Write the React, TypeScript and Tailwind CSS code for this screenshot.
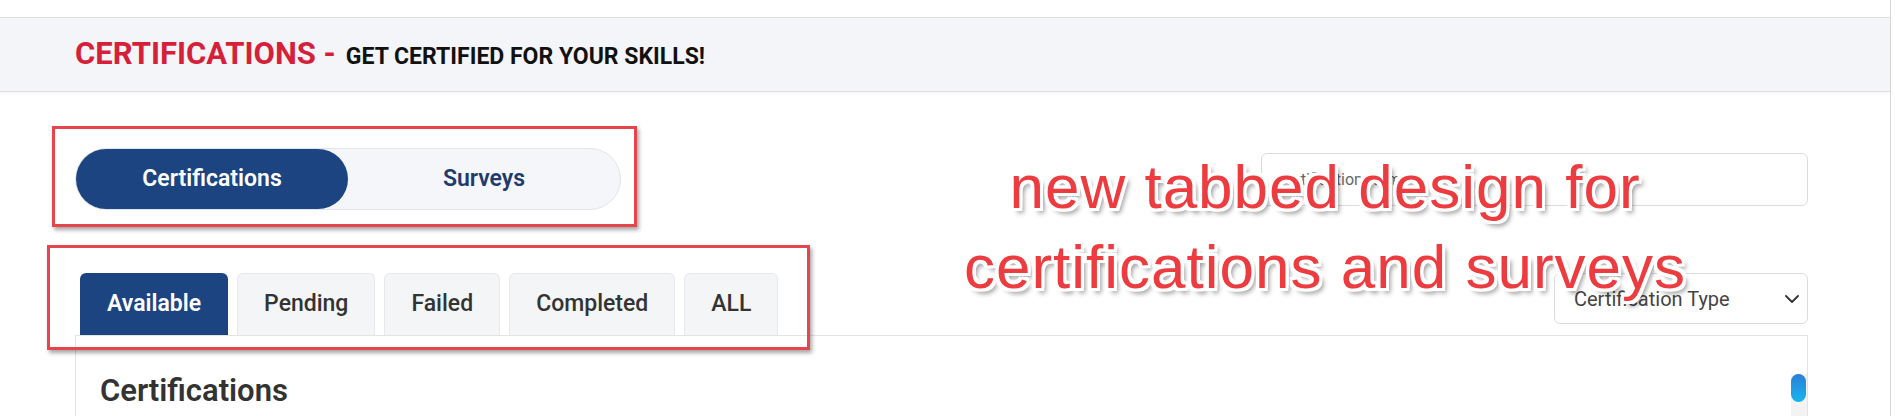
import { useState } from "react";

const tabs = ["Available", "Pending", "Failed", "Completed", "ALL"];

const outline =
  "[text-shadow:-3px_-3px_0_#fff,3px_-3px_0_#fff,-3px_3px_0_#fff,3px_3px_0_#fff,0_-3px_0_#fff,0_3px_0_#fff,-3px_0_0_#fff,3px_0_0_#fff,4px_5px_5px_rgba(0,0,0,0.45)]";

const App = () => {
  const [mode, setMode] = useState("certifications");
  const [tab, setTab] = useState("Available");

  return (
    <div className="relative h-[416px] w-full overflow-hidden bg-white font-['Roboto',sans-serif]">
      <div className="flex h-full">
        <div className="flex h-full w-[1891px] flex-col border-r border-[#d9d9d9] pt-[17px]">
          {/* Page title */}
          <header className="flex h-[75px] items-center border-y border-[#dedede] bg-[#f4f5f8] pl-[75px] shadow-[0_2px_3px_rgba(0,0,0,0.04)]">
            <h1 className="flex items-baseline">
              <span className="text-[31px] font-bold text-[#d61f3a]">CERTIFICATIONS -</span>
              <span className="ml-[10px] text-[23px] font-bold text-[#111]">GET CERTIFIED FOR YOUR SKILLS!</span>
            </h1>
          </header>

          <div className="flex flex-1 flex-col pl-[75px] pr-[82px]">
            {/* Certifications / Surveys switch + search */}
            <div className="mt-[56px] flex items-center justify-between">
              <div className="grid h-[62px] w-[546px] grid-cols-2 rounded-full border border-[#e2e5ea] bg-[#f4f6f9]">
                <button
                  onClick={() => setMode("certifications")}
                  className={
                    mode === "certifications"
                      ? "rounded-full bg-[#1c4481] text-[23px] font-semibold text-white"
                      : "rounded-full text-[23px] font-semibold text-[#1f3b6e]"
                  }
                >
                  Certifications
                </button>
                <button
                  onClick={() => setMode("surveys")}
                  className={
                    mode === "surveys"
                      ? "rounded-full bg-[#1c4481] text-[23px] font-semibold text-white"
                      : "rounded-full text-[23px] font-semibold text-[#1f3b6e]"
                  }
                >
                  Surveys
                </button>
              </div>
              <input
                placeholder="Certification Name"
                className="h-[53px] w-[547px] rounded-[6px] border border-[#dcdcdc] px-[14px] text-[16px] text-[#444] outline-none placeholder:text-[#666]"
              />
            </div>

            {/* Status tabs + type filter */}
            <div className="mt-[63px] flex h-[62px] items-start justify-between">
              <div className="flex h-full gap-[9px] pl-[5px]">
                {tabs.map((t) => (
                  <button
                    key={t}
                    onClick={() => setTab(t)}
                    className={
                      tab === t
                        ? "h-full rounded-t-[6px] bg-[#1c4481] px-[27px] text-[23px] font-semibold text-white"
                        : "h-full rounded-t-[6px] border border-b-0 border-[#e6e8ec] bg-[#f4f5f7] px-[26px] text-[23px] font-medium text-[#333]"
                    }
                  >
                    {t}
                  </button>
                ))}
              </div>
              <div className="flex h-[51px] w-[254px] items-center justify-between rounded-[6px] border border-[#dcdcdc] pl-[19px] pr-[8px] text-[20px] text-[#444]">
                <span>Certification Type</span>
                <svg width="14" height="8" viewBox="0 0 14 8" fill="none">
                  <path d="M1 1l6 6 6-6" stroke="#333" strokeWidth="1.8" strokeLinecap="round" strokeLinejoin="round" />
                </svg>
              </div>
            </div>

            {/* Card */}
            <div className="flex flex-1 border border-b-0 border-[#e3e3e3]">
              <div className="flex-1 pl-[24px] pt-[37px]">
                <h2 className="text-[31px] font-semibold leading-[36px] text-[#333]">Certifications</h2>
              </div>
              <div className="flex w-[16px] flex-col pt-[38px]">
                <div className="flex flex-1 flex-col bg-[#f3f3f3]">
                  <div className="h-[28px] w-[15px] rounded-full bg-gradient-to-b from-[#2a7ed6] to-[#12b6f0]" />
                </div>
              </div>
            </div>
          </div>
        </div>
      </div>

      {/* Annotation overlay */}
      <div className="pointer-events-none absolute left-[52px] top-[126px] h-[101px] w-[585px] border-[3px] border-[#e6454b] shadow-[2px_3px_4px_rgba(0,0,0,0.35)]" />
      <div className="pointer-events-none absolute left-[47px] top-[245px] h-[105px] w-[763px] border-[3px] border-[#e6454b] shadow-[2px_3px_4px_rgba(0,0,0,0.35)]" />
      <div
        className={`pointer-events-none absolute left-[925px] top-[147px] w-[800px] text-center font-['Liberation_Sans',Arial,sans-serif] text-[62px] leading-[80px] tracking-[1px] text-[#ec3c3f] ${outline}`}
      >
        new tabbed design for
        <br />
        certifications and surveys
      </div>
    </div>
  );
};

export default App;
